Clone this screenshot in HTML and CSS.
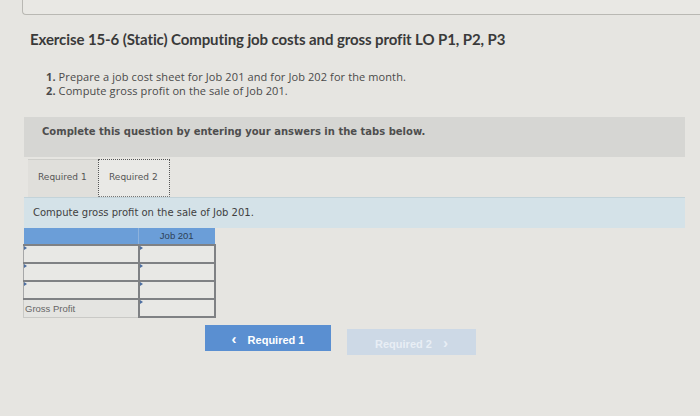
FILE: index.html
```html
<!DOCTYPE html>
<html>
<head>
<meta charset="utf-8">
<link rel="stylesheet" href="styles.css">
</head>
<body>
<div class="page">
  <div class="topbox"></div>
  <h1 class="title">Exercise 15-6 (Static) Computing job costs and gross profit LO P1, P2, P3</h1>
  <ol class="tasks">
    <li><span class="num">1.</span> Prepare a job cost sheet for Job 201 and for Job 202 for the month.</li>
    <li><span class="num">2.</span> Compute gross profit on the sale of Job 201.</li>
  </ol>
  <div class="banner">Complete this question by entering your answers in the tabs below.</div>
  <div class="tabs">
    <div class="tab">Required 1</div>
    <div class="tab active">Required 2</div>
  </div>
  <div class="prompt">Compute gross profit on the sale of Job 201.</div>
  <table class="grid">
    <tr class="head"><th class="c1"></th><th class="c2">Job 201</th></tr>
    <tr><td class="c1 in"><span class="mark"></span></td><td class="c2 in"><span class="mark"></span></td></tr>
    <tr><td class="c1 in"><span class="mark"></span></td><td class="c2 in"><span class="mark"></span></td></tr>
    <tr><td class="c1 in"><span class="mark"></span></td><td class="c2 in"><span class="mark"></span></td></tr>
    <tr><td class="c1 label">Gross Profit</td><td class="c2 in"><span class="mark"></span></td></tr>
  </table>
  <div class="nav">
    <button class="btn prev"><span class="chev">&lsaquo;</span> Required 1</button>
    <button class="btn next">Required 2 <span class="chev">&rsaquo;</span></button>
  </div>
</div>
</body>
</html>
```
FILE: styles.css
```css
html, body {
  margin: 0;
  padding: 0;
}
body {
  width: 700px;
  height: 416px;
  overflow: hidden;
  background: #e6e5e1;
  font-family: "Liberation Sans", Arial, sans-serif;
  color: #3c3c3c;
}
.page {
  position: relative;
  height: 416px;
}
.topbox {
  margin-left: 22px;
  height: 14px;
  border-left: 1px solid #b9b8b3;
  border-bottom: 1px solid #b9b8b3;
  border-bottom-left-radius: 4px;
  background: #e9e8e4;
}
.title {
  margin: 15px 0 0 30px;
  font-family: Lato, "Liberation Sans", sans-serif;
  font-size: 15px;
  font-weight: bold;
  color: #3a3a3a;
  line-height: 18px;
  letter-spacing: -0.1px;
}
.tasks {
  list-style: none;
  margin: 22px 0 0 46px;
  padding: 0;
  font-family: "Open Sans", "Liberation Sans", sans-serif;
  font-size: 11px;
  line-height: 14px;
  color: #4a4a4a;
  letter-spacing: 0.1px;
}
.num {
  font-weight: bold;
}
.banner {
  margin: 19px 15px 0 24px;
  height: 40px;
  box-sizing: border-box;
  padding: 8px 0 0 18px;
  background: #d6d6d3;
  font-family: "DejaVu Sans", Verdana, sans-serif;
  font-weight: bold;
  font-size: 10px;
  line-height: 14px;
  color: #4e4e4e;
}
.tabs {
  display: flex;
  margin: 2px 15px 0 28px;
  height: 38px;
}
.tab {
  display: flex;
  align-items: center;
  padding: 0 10px 3px;
  font-family: "DejaVu Sans", Verdana, sans-serif;
  font-size: 9px;
  color: #555;
  background: #e0dfdb;
  border-top: 1px solid #cfcfcb;
}
.tab:first-child {
  width: 70px;
  box-sizing: border-box;
}
.tab.active {
  width: 72px;
  box-sizing: border-box;
  background: #e9e9e6;
  border: 1px dotted #555;
  border-bottom: 1px dotted #777;
  padding-bottom: 2px;
}
.prompt {
  margin: 0 15px 0 24px;
  height: 31px;
  box-sizing: border-box;
  padding: 8px 0 0 9px;
  background: #d4e2e8;
  border-top: 1px solid #c3d3d9;
  font-family: "DejaVu Sans", Verdana, sans-serif;
  font-size: 10px;
  line-height: 13px;
  color: #3f3f3f;
}
.grid {
  margin: 0 0 0 23px;
  border-collapse: collapse;
  font-family: "Liberation Sans", Arial, sans-serif;
}
.grid td, .grid th {
  padding: 0;
  box-sizing: border-box;
}
.grid .c1 { width: 115px; }
.grid .c2 { width: 76px; }
.grid .head th {
  height: 17px;
  background: #6b9ed8;
  border-bottom: 1px solid #6f8aa8;
  font-weight: normal;
  font-size: 9.5px;
  color: #2d3f57;
  vertical-align: top;
  padding-top: 2px;
}
.grid .head th.c1 {
  border-right: 1px solid #8db2dc;
}
.grid td.in {
  position: relative;
  background: #e8e8e5;
  border: 2px solid #7f8184;
  height: 18px;
}
.grid td.c1.in { border-left: 1px solid #a6a7a8; }
.grid td.label {
  background: #e4e4e1;
  border-left: 1px solid #c9c9c6;
  border-bottom: 1px solid #c9c9c6;
  font-size: 9.5px;
  color: #666;
  padding-left: 1px;
  height: 18px;
}
.mark {
  position: absolute;
  left: 0;
  top: 0;
  width: 0;
  height: 0;
  border-left: 3px solid #4c6ea0;
  border-top: 2px solid transparent;
  border-bottom: 2px solid transparent;
}
.nav {
  display: flex;
  align-items: flex-start;
  gap: 16px;
  margin: 7px 0 0 205px;
}
.btn {
  height: 26px;
  width: 126px;
  border: none;
  font-family: "Liberation Sans", Arial, sans-serif;
  font-weight: bold;
  font-size: 11px;
  padding: 0;
}
.btn.prev {
  background: #5a8fd1;
  color: #fff;
}
.btn.prev .chev {
  font-size: 15px;
  margin-right: 8px;
}
.btn.next {
  margin-top: 4px;
  width: 129px;
  background: #cdd9e6;
  color: #e8eef5;
}
.btn.next .chev {
  font-size: 15px;
  margin-left: 8px;
}
```
